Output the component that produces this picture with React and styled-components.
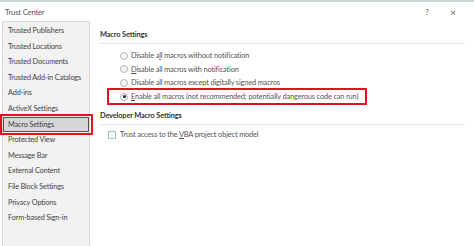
import React from "react";
import styled, { createGlobalStyle } from "styled-components";

const Global = createGlobalStyle`
  html, body { margin: 0; padding: 0; background: #ffffff; }
  body { font-family: Lato, "Open Sans", sans-serif; color: #444; letter-spacing: -0.15px; }
`;

const Window = styled.div`
  width: 474px;
  height: 246px;
  overflow: hidden;
  display: flex;
  flex-direction: column;
  border-top: 2px solid #c9d6d0;
  box-sizing: border-box;
  background: #fff;
`;

const TitleBar = styled.div`
  height: 19px;
  display: flex;
  align-items: center;
  padding: 0 8px 0 5px;
  font-size: 7.6px;
  color: #555;
`;

const Title = styled.span`
  flex: 1;
`;

const TitleButton = styled.span`
  width: 26px;
  text-align: center;
  font-size: ${(p) => p.size || 8}px;
  color: #666;
`;

const Body = styled.div`
  flex: 1;
  display: flex;
  padding-left: 2px;
`;

const Sidebar = styled.nav`
  width: 86px;
  background: #f2f2f2;
  border: 1px solid #d9d9d9;
  border-bottom: none;
  padding-top: 1px;
  display: flex;
  flex-direction: column;
`;

const NavItem = styled.div`
  position: relative;
  height: 15.6px;
  line-height: 15.6px;
  padding-left: 5px;
  font-size: 7.3px;
  color: #444;
  white-space: nowrap;
  background: ${(p) => (p.$active ? "#d6d6d6" : "transparent")};
  outline: ${(p) => (p.$active ? "1px solid #555" : "none")};
  outline-offset: -1px;
`;

const Highlight = styled.span`
  position: absolute;
  left: -3px;
  right: -4px;
  top: -3px;
  bottom: -3px;
  border: 2px solid #e0141e;
  pointer-events: none;
`;

const Main = styled.main`
  flex: 1;
  padding: 5px 9px 0 10px;
`;

const Section = styled.section`
  margin-bottom: 2px;
`;

const Heading = styled.h2`
  margin: 0;
  font-size: 7.4px;
  font-weight: 700;
  color: #333;
  height: 17px;
  line-height: 17px;
  border-bottom: 1px solid #e3e3e3;
`;

const Options = styled.div`
  padding: 5px 0 2px 20px;
  display: flex;
  flex-direction: column;
`;

const Option = styled.label`
  position: relative;
  display: flex;
  align-items: center;
  gap: 3px;
  height: 13.6px;
  font-size: 7.4px;
  color: #555;
  white-space: nowrap;
`;

const Radio = styled.span`
  width: 6px;
  height: 6px;
  border-radius: 50%;
  border: 1px solid #b5b5b5;
  background: #f4f4f4;
  display: flex;
  align-items: center;
  justify-content: center;
  &::after {
    content: "";
    width: 3px;
    height: 3px;
    border-radius: 50%;
    background: ${(p) => (p.$checked ? "#222" : "transparent")};
  }
`;

const OptionBox = styled.span`
  position: absolute;
  left: -13px;
  top: -2px;
  bottom: -2px;
  width: 256px;
  border: 2px solid #e0141e;
  pointer-events: none;
`;

const CheckRow = styled.label`
  display: flex;
  align-items: center;
  gap: 4px;
  padding: 5px 0 0 8px;
  font-size: 7.4px;
  color: #555;
  white-space: nowrap;
`;

const Checkbox = styled.span`
  width: 6px;
  height: 6px;
  border: 1px solid #9fc8bd;
  background: #f4faf8;
`;

const U = styled.u`
  text-decoration-thickness: 1px;
`;

const navItems = [
  "Trusted Publishers",
  "Trusted Locations",
  "Trusted Documents",
  "Trusted Add-in Catalogs",
  "Add-ins",
  "ActiveX Settings",
  "Macro Settings",
  "Protected View",
  "Message Bar",
  "External Content",
  "File Block Settings",
  "Privacy Options",
  "Form-based Sign-in",
];

const options = [
  <>Disable a<U>l</U>l macros without notification</>,
  <><U>D</U>isable all macros with notification</>,
  <>Disable all macros except digitally signed macros</>,
  <><U>E</U>nable all macros (not recommended; potentially dangerous code can run)</>,
];

export default function App() {
  return (
    <>
      <Global />
      <Window>
        <TitleBar>
          <Title>Trust Center</Title>
          <TitleButton>?</TitleButton>
          <TitleButton size={10}>×</TitleButton>
        </TitleBar>
        <Body>
          <Sidebar>
            {navItems.map((item) => (
              <NavItem key={item} $active={item === "Macro Settings"}>
                {item}
                {item === "Macro Settings" && <Highlight />}
              </NavItem>
            ))}
          </Sidebar>
          <Main>
            <Section>
              <Heading>Macro Settings</Heading>
              <Options>
                {options.map((text, i) => (
                  <Option key={i}>
                    <Radio $checked={i === 3} />
                    <span>{text}</span>
                    {i === 3 && <OptionBox />}
                  </Option>
                ))}
              </Options>
            </Section>
            <Section>
              <Heading>Developer Macro Settings</Heading>
              <CheckRow>
                <Checkbox />
                <span>
                  Trust access to the <U>V</U>BA project object model
                </span>
              </CheckRow>
            </Section>
          </Main>
        </Body>
      </Window>
    </>
  );
}
